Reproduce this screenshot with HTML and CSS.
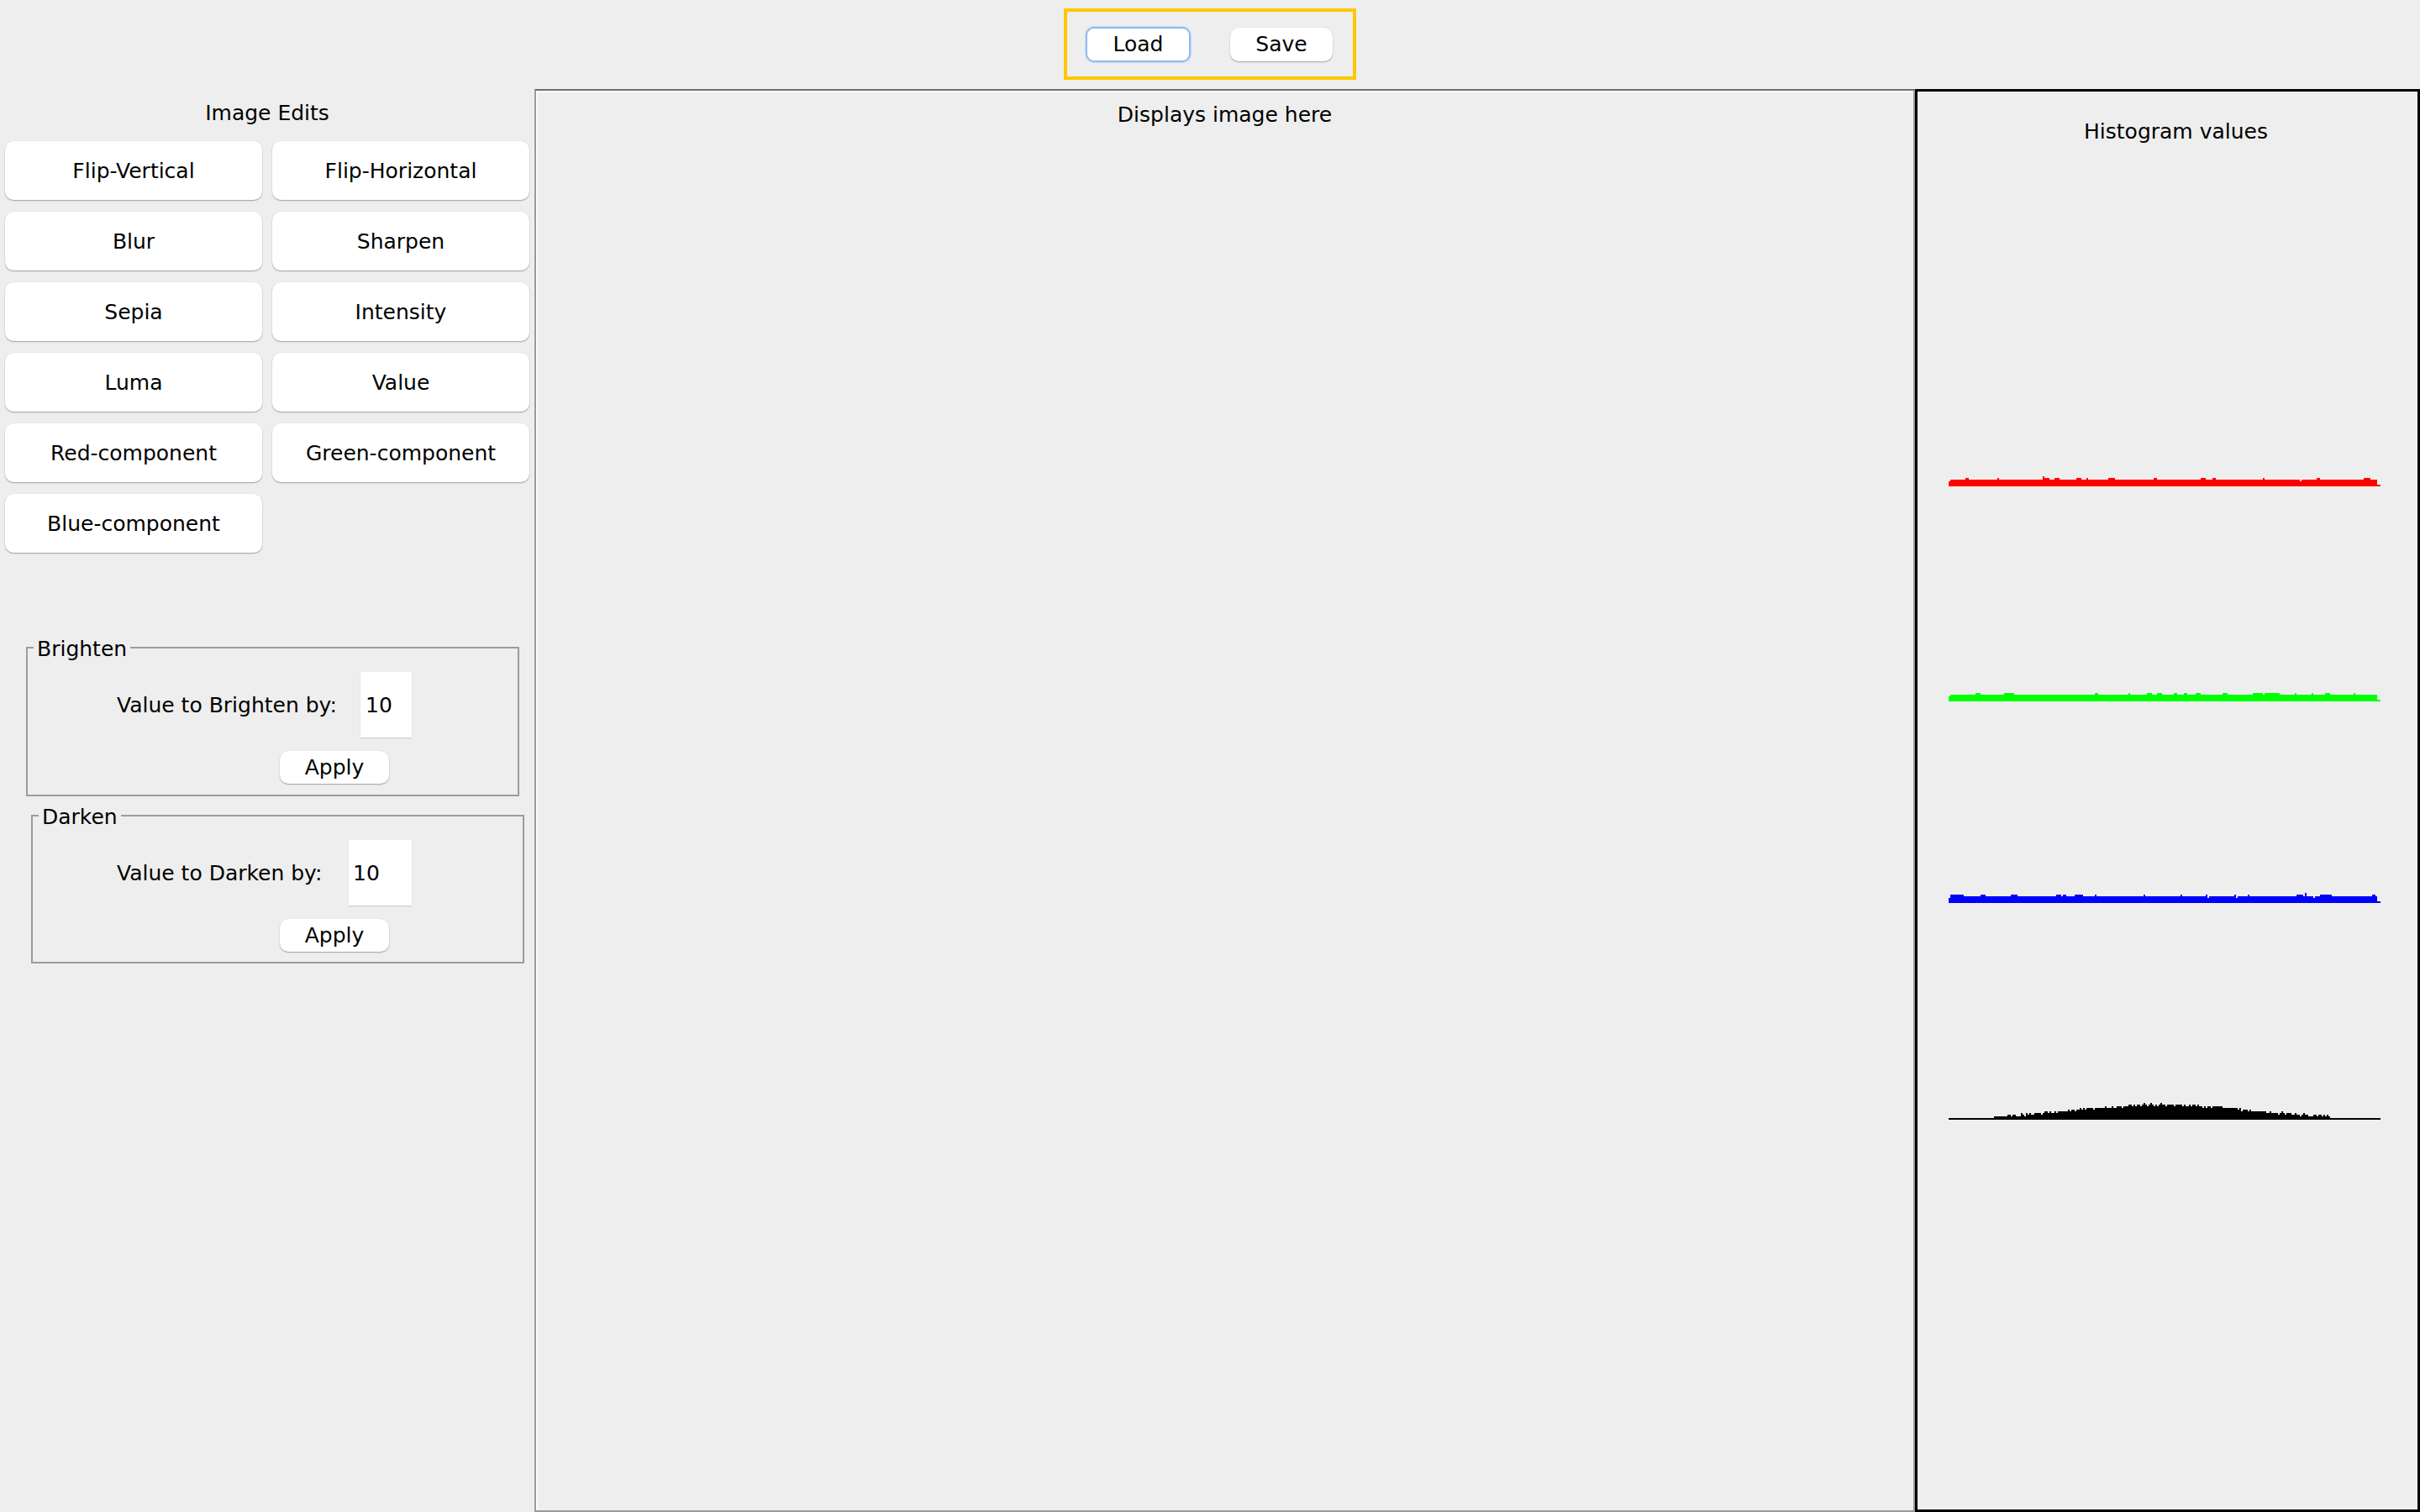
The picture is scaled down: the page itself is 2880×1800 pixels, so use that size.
FILE: index.html
```html
<!DOCTYPE html>
<html lang="en">
<head>
<meta charset="utf-8">
<title>Image Processor</title>
<link rel="stylesheet" href="styles.css">
</head>
<body>
<div class="app">
  <header class="topbar">
    <div class="filebox">
      <button class="btn btn-load">Load</button>
      <button class="btn btn-save">Save</button>
    </div>
  </header>
  <main class="workspace">
    <aside class="edits">
      <h2 class="panel-title">Image Edits</h2>
      <div class="edit-grid">
        <button class="btn">Flip-Vertical</button>
        <button class="btn">Flip-Horizontal</button>
        <button class="btn">Blur</button>
        <button class="btn">Sharpen</button>
        <button class="btn">Sepia</button>
        <button class="btn">Intensity</button>
        <button class="btn">Luma</button>
        <button class="btn">Value</button>
        <button class="btn">Red-component</button>
        <button class="btn">Green-component</button>
        <button class="btn">Blue-component</button>
      </div>
      <fieldset class="adjust adjust-brighten">
        <legend>Brighten</legend>
        <div class="adjust-row">
          <label class="adjust-label">Value to Brighten by:</label>
          <input class="adjust-input" type="text" value="10" readonly>
        </div>
        <button class="btn btn-apply">Apply</button>
      </fieldset>
      <fieldset class="adjust adjust-darken">
        <legend>Darken</legend>
        <div class="adjust-row">
          <label class="adjust-label">Value to Darken by:</label>
          <input class="adjust-input" type="text" value="10" readonly>
        </div>
        <button class="btn btn-apply">Apply</button>
      </fieldset>
    </aside>
    <section class="viewer">
      <h2 class="panel-title">Displays image here</h2>
    </section>
    <section class="histogram">
      <h2 class="panel-title hist-title">Histogram values</h2>
      <svg id="hist" class="hist-chart" viewBox="0 0 595 860" xmlns="http://www.w3.org/2000/svg"></svg>
    </section>
  </main>
</div>
<script src="script.js"></script>
</body>
</html>
```

FILE: styles.css
```css
body {
  margin: 0;
  background: #eeeeee;
  font-family: "DejaVu Sans", "Liberation Sans", sans-serif;
  font-size: 25px;
  color: #000;
}

.app {
  width: 2880px;
  height: 1800px;
  display: flex;
  flex-direction: column;
  overflow: hidden;
}

.topbar {
  height: 106px;
  flex: none;
  display: flex;
  justify-content: center;
  align-items: flex-start;
}

.filebox {
  margin-top: 10px;
  box-sizing: border-box;
  width: 348px;
  height: 85px;
  border: 4px solid #ffc800;
  display: flex;
  align-items: center;
  padding-left: 22px;
  gap: 47px;
}

.btn {
  font: inherit;
  color: #000;
  background: #fff;
  border: none;
  border-radius: 10px;
  box-shadow: 0 1px 1.5px rgba(0, 0, 0, 0.32), 0 0 1px rgba(0, 0, 0, 0.12);
  padding: 0;
  line-height: 1;
  box-sizing: border-box;
}

.btn-load {
  width: 125px;
  height: 42px;
  border: 2px solid #8fbbee;
  box-shadow: 0 0 1px 1px #c9def7;
}

.btn-save {
  width: 122px;
  height: 40px;
}

.workspace {
  flex: 1;
  display: flex;
  min-height: 0;
}

.edits {
  width: 636px;
  flex: none;
}

.panel-title {
  margin: 0;
  font-size: 25px;
  font-weight: normal;
  line-height: 30px;
  text-align: center;
}

.edits .panel-title {
  margin-top: 14px;
}

.edit-grid {
  display: grid;
  grid-template-columns: 306px 306px;
  grid-auto-rows: 70px;
  column-gap: 12px;
  row-gap: 14px;
  margin: 18px 0 0 6px;
}

.adjust {
  box-sizing: border-box;
  width: 587px;
  min-width: 0;
  margin: 96px 0 0 31px;
  padding: 12px 0 13px 0;
  border: 2px solid #9c9c9c;
}

.adjust legend {
  padding: 4px 4px 0;
  margin-left: 7px;
  line-height: 30px;
}

.adjust-row {
  display: flex;
  align-items: center;
  margin-left: 106px;
}

.adjust-label {
  width: 290px;
  flex: none;
}

.adjust-input {
  width: 61px;
  height: 78px;
  box-sizing: border-box;
  border: none;
  outline: none;
  background: #fff;
  font: inherit;
  color: #000;
  padding: 0 0 0 6px;
  margin: 0;
  box-shadow: 0 1px 1px rgba(0, 0, 0, 0.14);
}

.btn-apply {
  display: block;
  width: 130px;
  height: 39px;
  margin: 16px 0 0 300px;
}

.adjust-darken {
  margin: 6px 0 0 37px;
  padding-bottom: 12px;
}

.adjust-darken .adjust-row {
  margin-left: 100px;
}

.adjust-darken .adjust-label {
  width: 276px;
}

.adjust-darken .adjust-input {
  width: 75px;
  padding-left: 5px;
}

.adjust-darken .btn-apply {
  margin-left: 294px;
}

.viewer {
  width: 1643px;
  flex: none;
  box-sizing: border-box;
  border: 2px solid #9a9a9a;
  border-top-color: #707070;
  box-shadow: inset 2px 2px 0 #fff;
}

.viewer .panel-title {
  margin-top: 14px;
}

.histogram {
  flex: 1;
  min-width: 0;
  box-sizing: border-box;
  border: 3px solid #000;
}

.hist-title {
  margin-top: 33px;
  padding-left: 20px;
}

.hist-chart {
  display: block;
  margin-top: 328px;
  width: 595px;
  height: 860px;
}
```

FILE: script.js
```javascript
(function () {
  function rng(seed) {
    return function () {
      seed |= 0;
      seed = (seed + 0x6D2B79F5) | 0;
      var t = Math.imul(seed ^ (seed >>> 15), 1 | seed);
      t = (t + Math.imul(t ^ (t >>> 7), 61 | t)) ^ t;
      return ((t ^ (t >>> 14)) >>> 0) / 4294967296;
    };
  }
  var NS = 'http://www.w3.org/2000/svg';
  var svg = document.getElementById('hist');
  var X0 = 37, BW = 2, N = 255, LEFT = 2282;

  function rect(x, y, w, h) {
    return 'M' + x + ' ' + y + 'h' + w + 'v' + h + 'h-' + w + 'z';
  }
  function addPath(d, color) {
    var p = document.createElementNS(NS, 'path');
    p.setAttribute('d', d);
    p.setAttribute('fill', color);
    p.setAttribute('shape-rendering', 'crispEdges');
    svg.appendChild(p);
  }

  function channel(seed, base, color) {
    var r = rng(seed);
    var d = '';
    var i = 0;
    while (i < N) {
      var v = r();
      var h = 8, run;
      if (v < 0.24) { h = 10; run = 1 + Math.floor(r() * 3); }
      else if (v < 0.255) { h = 12; run = 1; }
      else if (v < 0.29) { h = 6; run = 1; }
      else { run = 1 + Math.floor(r() * 7); }
      if (i === 0) { h = 6; run = 1; }
      for (var k = 0; k < run && i < N; k++, i++) {
        d += rect(X0 + i * BW, base - h, BW, h);
      }
    }
    d += rect(X0 + N * BW, base - 2, 4, 2);
    addPath(d, color);
  }

  function luma(seed, base) {
    var r = rng(seed);
    var d = rect(X0, base - 2, N * BW + 4, 2);
    for (var i = 0; i < N; i++) {
      var x = LEFT + X0 + i * BW;
      var dd = x - 2572;
      if (Math.abs(dd) > 200) continue;
      var g = 16 * Math.exp(-dd * dd / 20000) + (r() - 0.5) * 3.2;
      var h = 2 + Math.max(2, Math.round(g / 2) * 2);
      d += rect(X0 + i * BW, base - h, BW, h);
    }
    addPath(d, '#000');
  }

  channel(11, 79, '#ff0000');
  channel(23, 335, '#00ff00');
  channel(37, 575, '#0000ff');
  luma(51, 833);
})();
```
